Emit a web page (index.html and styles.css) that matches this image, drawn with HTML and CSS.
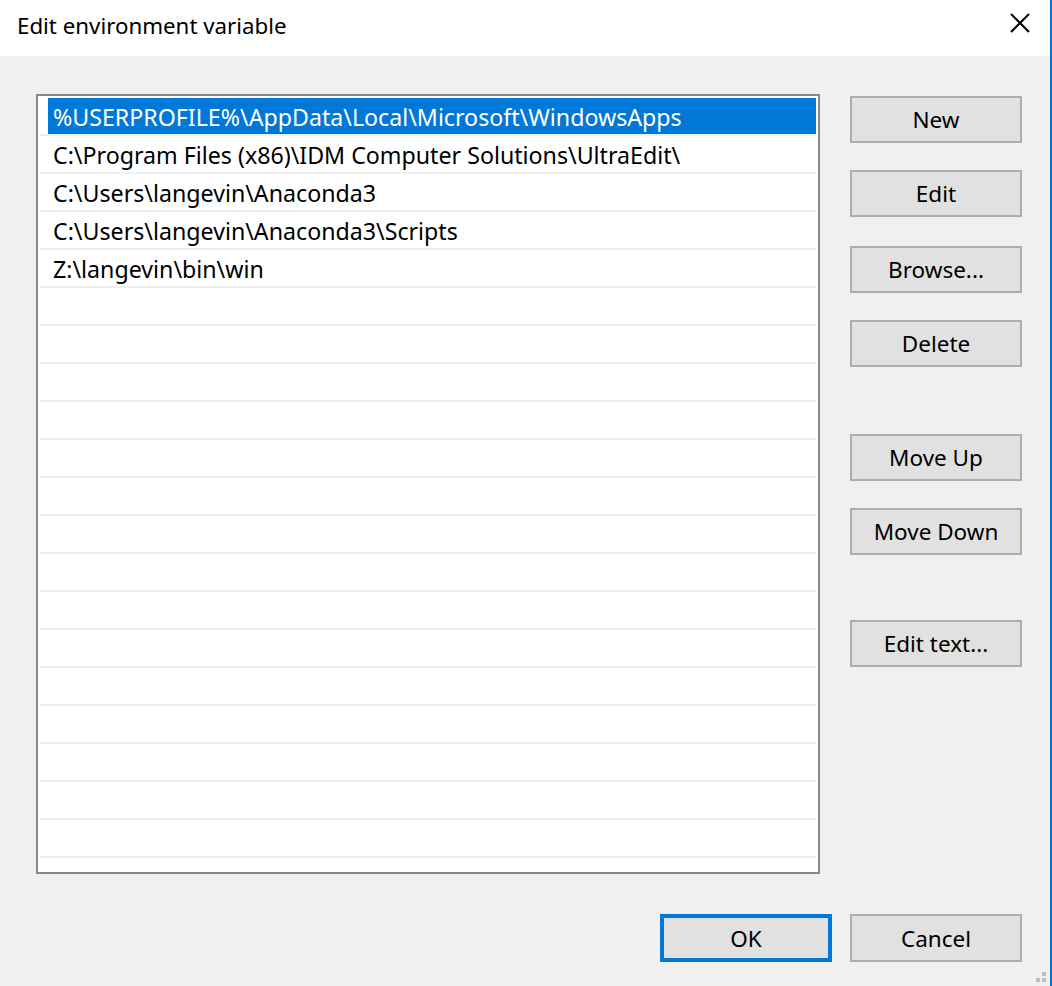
FILE: index.html
```html
<!DOCTYPE html>
<html>
<head>
<meta charset="utf-8">
<title>Edit environment variable</title>
<link rel="stylesheet" href="styles.css">
</head>
<body>
<div class="window">
  <div class="titlebar">
    <span class="title">Edit environment variable</span>
    <svg class="close" width="20" height="20" viewBox="0 0 20 20"><path d="M1 1 L19 19 M19 1 L1 19" stroke="#000" stroke-width="2" fill="none"/></svg>
  </div>
  <div class="content">
    <div class="list">
      <div class="row selected"><span class="item">%USERPROFILE%\AppData\Local\Microsoft\WindowsApps</span></div>
      <div class="row"><span class="item">C:\Program Files (x86)\IDM Computer Solutions\UltraEdit\</span></div>
      <div class="row"><span class="item">C:\Users\langevin\Anaconda3</span></div>
      <div class="row"><span class="item">C:\Users\langevin\Anaconda3\Scripts</span></div>
      <div class="row"><span class="item">Z:\langevin\bin\win</span></div>
      <div class="row"><span class="item"></span></div>
      <div class="row"><span class="item"></span></div>
      <div class="row"><span class="item"></span></div>
      <div class="row"><span class="item"></span></div>
      <div class="row"><span class="item"></span></div>
      <div class="row"><span class="item"></span></div>
      <div class="row"><span class="item"></span></div>
      <div class="row"><span class="item"></span></div>
      <div class="row"><span class="item"></span></div>
      <div class="row"><span class="item"></span></div>
      <div class="row"><span class="item"></span></div>
      <div class="row"><span class="item"></span></div>
      <div class="row"><span class="item"></span></div>
      <div class="row"><span class="item"></span></div>
      <div class="row"><span class="item"></span></div>
    </div>
    <div class="side">
      <button class="btn">New</button>
      <button class="btn">Edit</button>
      <button class="btn gap-s">Browse...</button>
      <button class="btn">Delete</button>
      <button class="btn gap-l">Move Up</button>
      <button class="btn">Move Down</button>
      <button class="btn gap-m">Edit text...</button>
    </div>
  </div>
  <div class="footer">
    <button class="btn default">OK</button>
    <button class="btn">Cancel</button>
  </div>
  <div class="grip">
    <span class="dot d1"></span>
    <span class="dot d2"></span>
    <span class="dot d3"></span>
  </div>
</div>
</body>
</html>
```
FILE: styles.css
```css
html, body {
  margin: 0;
  padding: 0;
  background: #f0f0f0;
}
.window {
  position: relative;
  width: 1052px;
  height: 986px;
  box-sizing: border-box;
  border-right: 2px solid #0078d7;
  background: #f0f0f0;
  font-family: "Noto Sans", "Open Sans", sans-serif;
  font-size: 22.5px;
  color: #000;
  display: flex;
  flex-direction: column;
}
.titlebar {
  height: 56px;
  background: #fff;
  display: flex;
  align-items: center;
  justify-content: space-between;
  padding: 0 20px 0 17px;
  flex-shrink: 0;
}
.title {
  font-size: 22.3px;
  margin-top: -6px;
}
.close {
  display: block;
  margin-top: -10px;
}
.content {
  display: flex;
  padding: 38px 28px 0 36px;
  gap: 30px;
}
.list {
  width: 784px;
  height: 780px;
  box-sizing: border-box;
  border: 2px solid #828790;
  background: #fff;
  padding: 2px;
  font-size: 23.2px;
}
.row {
  height: 36px;
  border-bottom: 2px solid #f0f0f0;
  display: flex;
}
.item {
  flex: 1;
  margin-left: 8px;
  padding: 2px 0 0 5px;
  line-height: 34px;
  white-space: nowrap;
}
.selected .item {
  background: #0078d7;
  color: #fff;
}
.side {
  display: flex;
  flex-direction: column;
  gap: 27px;
  padding-top: 2px;
}
.btn {
  width: 172px;
  height: 47px;
  box-sizing: border-box;
  border: 2px solid #adadad;
  background: #e1e1e1;
  font-family: "Noto Sans", "Open Sans", sans-serif;
  font-size: 22.5px;
  color: #000;
  padding: 0;
  margin: 0;
}
.gap-s { margin-top: 2px; }
.gap-l { margin-top: 40px; }
.gap-m { margin-top: 38px; }
.footer {
  display: flex;
  justify-content: flex-end;
  gap: 18px;
  padding-right: 28px;
  margin-top: 40px;
}
.footer .btn {
  height: 48px;
}
.default {
  border: 4px solid #0078d7;
}
.grip {
  position: absolute;
  right: 0;
  bottom: 0;
  width: 16px;
  height: 14px;
}
.dot {
  position: absolute;
  width: 4px;
  height: 4px;
  background: #bcbcbc;
}
.d1 { left: 2px; top: 6px; }
.d2 { left: 8px; top: 6px; }
.d3 { left: 8px; top: 0px; }
```
